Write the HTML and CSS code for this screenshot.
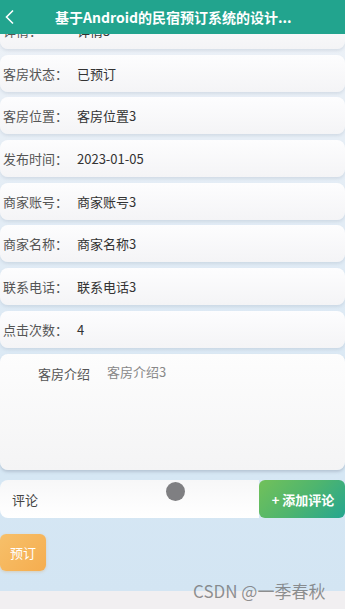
FILE: index.html
```html
<!DOCTYPE html>
<html lang="zh-CN">
<head>
    <meta charset="UTF-8">
    <meta name="viewport" content="width=device-width, initial-scale=1.0">
    <title>民宿详情</title>
    <link rel="stylesheet" href="styles.css">
</head>
<body>

    <div class="screen">
        <!-- 顶部标题栏 -->
        <header class="topbar">
            <svg class="back-icon" width="12" height="16" viewBox="0 0 12 16">
                <path d="M9 1.5 L2.5 8 L9 14.5" fill="none" stroke="#fff" stroke-width="1.6"/>
            </svg>
            <span class="topbar-title">基于Android的民宿预订系统的设计...</span>
        </header>

        <!-- 详情内容 -->
        <main class="detail">
            <div class="info-row"><span class="info-label">详情：</span><span class="info-value">详情3</span></div>
            <div class="info-row"><span class="info-label">客房状态：</span><span class="info-value">已预订</span></div>
            <div class="info-row"><span class="info-label">客房位置：</span><span class="info-value">客房位置3</span></div>
            <div class="info-row"><span class="info-label">发布时间：</span><span class="info-value">2023-01-05</span></div>
            <div class="info-row"><span class="info-label">商家账号：</span><span class="info-value">商家账号3</span></div>
            <div class="info-row"><span class="info-label">商家名称：</span><span class="info-value">商家名称3</span></div>
            <div class="info-row"><span class="info-label">联系电话：</span><span class="info-value">联系电话3</span></div>
            <div class="info-row"><span class="info-label">点击次数：</span><span class="info-value">4</span></div>

            <div class="intro-card">
                <span class="intro-label">客房介绍</span>
                <span class="intro-value">客房介绍3</span>
            </div>

            <!-- 评论 -->
            <div class="comment-bar">
                <div class="comment-input">评论</div>
                <button class="comment-btn">+ 添加评论</button>
            </div>

            <button class="order-btn">预订</button>
        </main>

        <div class="bottom-strip"></div>

        <!-- 触摸指示点和水印 -->
        <div class="touch-dot"></div>
        <div class="watermark">CSDN @一季春秋</div>
    </div>

</body>
</html>
```

FILE: styles.css
```css
body {
    margin: 0;
    font-family: "Noto Sans CJK SC", "Noto Sans", sans-serif;
    background-color: #f1eff1;
}

.screen {
    position: relative;
    width: 345px;
    height: 609px;
    overflow: hidden;
}

.topbar {
    position: absolute;
    top: 0;
    left: 0;
    right: 0;
    height: 34px;
    background-color: #22a48e;
    display: flex;
    align-items: center;
    z-index: 2;
}

.back-icon {
    margin-left: 4px;
}

.topbar-title {
    margin-left: 39px;
    color: #fff;
    font-size: 14px;
    font-weight: bold;
    white-space: nowrap;
}

.detail {
    height: 579px;
    padding-top: 12px;
    background: linear-gradient(180deg, #eef2f7 0%, #e2ecf5 40%, #d6e7f4 80%, #d3e5f3 100%);
    display: flex;
    flex-direction: column;
    gap: 5.7px;
}

.info-row {
    height: 37px;
    flex-shrink: 0;
    display: flex;
    align-items: center;
    background: linear-gradient(180deg, #fdfdfe 0%, #f4f4f6 100%);
    border-radius: 8px;
    box-shadow: 0 2px 3px rgba(120, 140, 160, 0.18);
    font-size: 13px;
}

.info-label {
    width: 74px;
    padding-left: 3px;
    color: #555;
}

.info-value {
    color: #333;
}

.intro-card {
    height: 116px;
    flex-shrink: 0;
    box-sizing: border-box;
    padding: 9px 0 0 38px;
    display: flex;
    align-items: flex-start;
    background: linear-gradient(180deg, #fdfdfd 0%, #f4f4f5 100%);
    border-radius: 8px;
    box-shadow: 0 2px 3px rgba(110, 120, 140, 0.3);
    font-size: 13px;
}

.intro-label {
    color: #555;
    margin-top: 1px;
}

.intro-value {
    margin-left: 17px;
    color: #888;
    margin-top: -1px;
}

.comment-bar {
    height: 38px;
    flex-shrink: 0;
    margin-top: 5px;
    display: flex;
}

.comment-input {
    flex: 1;
    display: flex;
    align-items: center;
    padding-left: 12px;
    background: linear-gradient(180deg, #f7f7f8 0%, #ffffff 100%);
    border-radius: 8px 0 0 8px;
    font-size: 13px;
    color: #444;
}

.comment-btn {
    width: 86px;
    border: none;
    border-radius: 6px;
    background: linear-gradient(135deg, #72c15a 0%, #4fb56e 50%, #25a690 100%);
    color: #fff;
    font-family: inherit;
    font-size: 13px;
    font-weight: bold;
    padding: 0 0 0 2px;
}

.order-btn {
    width: 46px;
    height: 37px;
    flex-shrink: 0;
    margin-top: 10px;
    border: none;
    border-radius: 6px;
    background: linear-gradient(135deg, #f7c06a 0%, #f5ad4f 100%);
    box-shadow: 0 1px 3px rgba(220, 150, 60, 0.3);
    color: #fff;
    font-family: inherit;
    font-size: 13px;
    padding: 0;
}

.bottom-strip {
    height: 18px;
    background-color: #f1eff1;
}

.touch-dot {
    position: absolute;
    left: 166px;
    top: 482px;
    width: 19px;
    height: 19px;
    border-radius: 50%;
    background-color: #7f7f82;
    filter: blur(0.6px);
}

.watermark {
    position: absolute;
    left: 193px;
    top: 578px;
    font-size: 17px;
    color: rgba(110, 110, 110, 0.75);
    font-family: "Noto Sans CJK SC", "Liberation Sans", sans-serif;
}
```
